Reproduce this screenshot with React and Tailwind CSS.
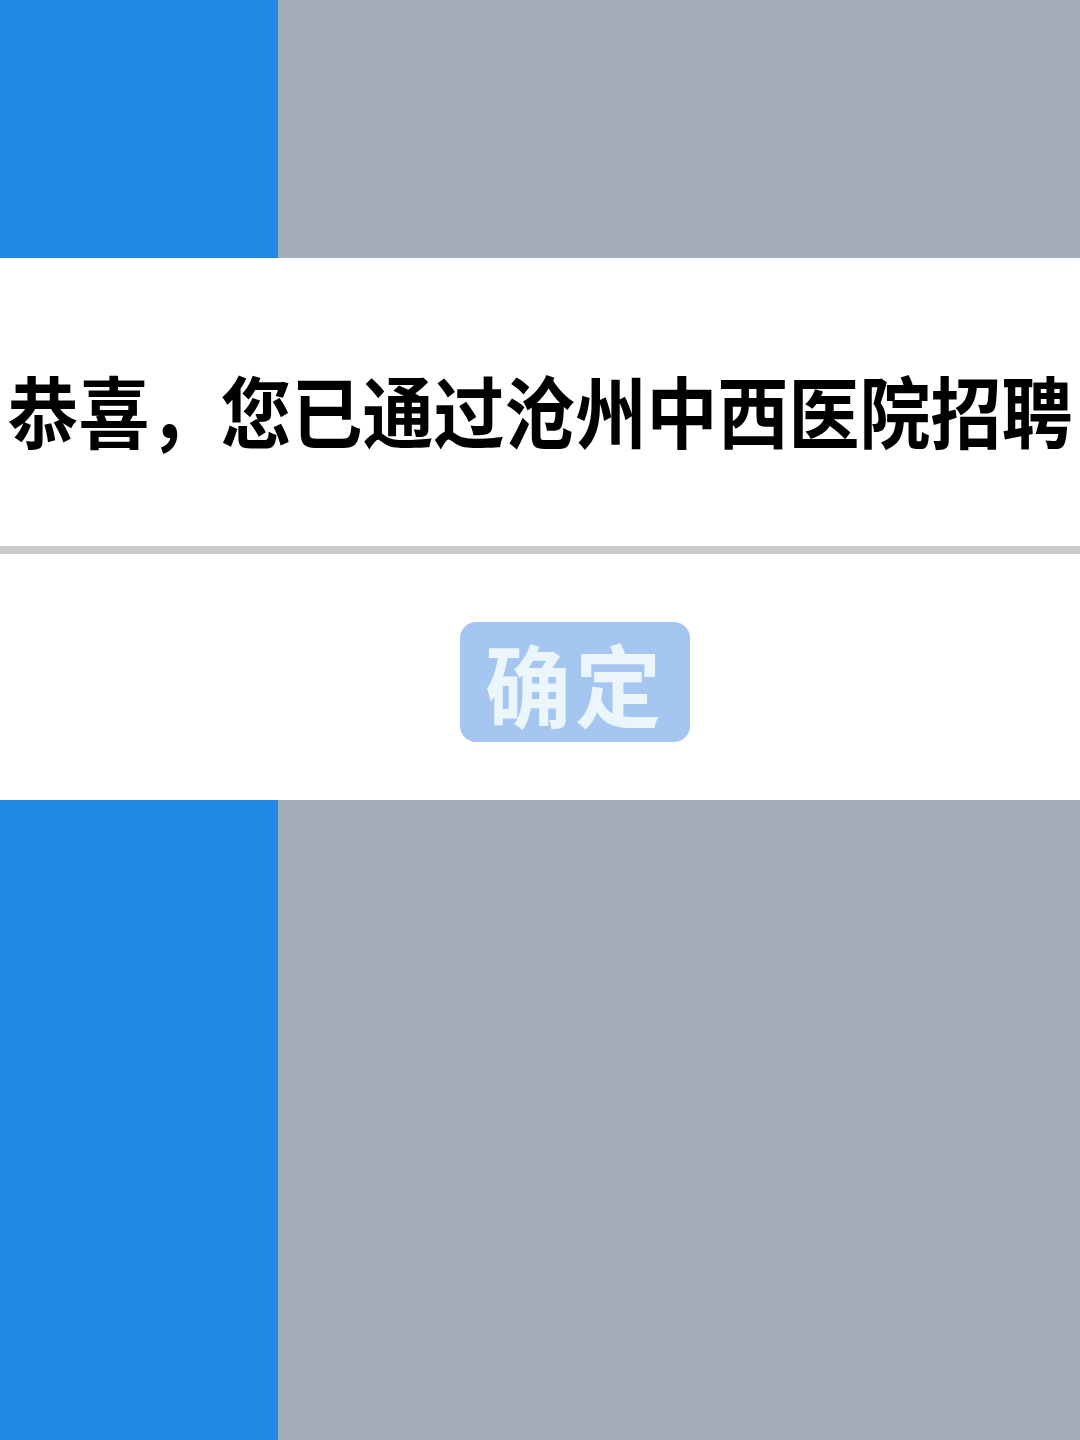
export default function App() {
  return (
    <div
      className="w-[1080px] h-[1440px] flex flex-col overflow-hidden"
      style={{ fontFamily: '"Noto Sans CJK SC", "Noto Sans", sans-serif' }}
    >
      {/* top band */}
      <div className="flex h-[258px]">
        <div className="w-[278px] bg-[#1f89e6]" />
        <div className="flex-1 bg-[#a3adb9]" />
      </div>

      {/* dialog */}
      <div className="h-[542px] bg-white flex flex-col">
        <div className="h-[288px] flex items-center justify-center pt-[14px]">
          <p className="text-[71px] leading-none font-bold text-black whitespace-nowrap tracking-[0px] scale-y-[1.1]">
            恭喜，您已通过沧州中西医院招聘
          </p>
        </div>
        <div className="h-[8px] bg-[#cbcbcb]" />
        <div className="flex-1 flex items-center justify-center pl-[70px] pt-[10px]">
          <div className="w-[230px] h-[120px] rounded-[16px] bg-[#a5c6f0] flex items-center justify-center">
            <span className="text-[86px] leading-none font-bold text-[#eaf6fb] tracking-[4px] scale-y-[1.05]">确定</span>
          </div>
        </div>
      </div>

      {/* bottom band */}
      <div className="flex flex-1">
        <div className="w-[278px] bg-[#1f89e6]" />
        <div className="flex-1 bg-[#a3adb9]" />
      </div>
    </div>
  );
}
